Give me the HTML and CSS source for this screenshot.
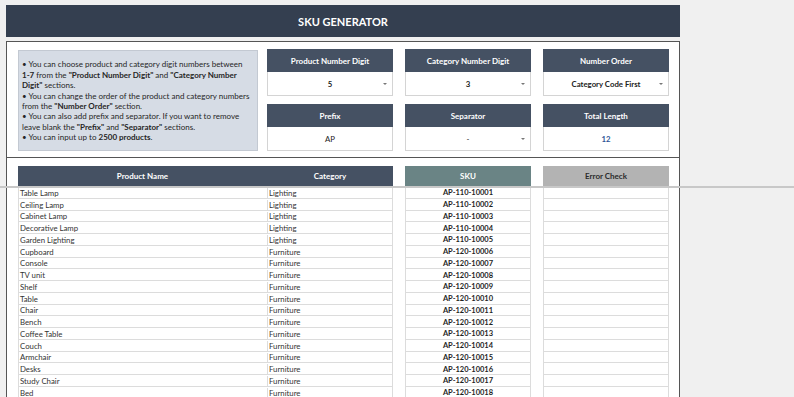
FILE: index.html
```html
<!DOCTYPE html>
<html lang="en">
<head>
  <meta charset="UTF-8">
  <title>SKU Generator</title>
  <link rel="stylesheet" href="styles.css">
</head>
<body>
  <div class="sheet">
    <div class="title">SKU GENERATOR</div>

    <div class="panel">
      <div class="top">
        <div class="info">
          <p>
            • You can choose product and category digit numbers between<br>
            <b>1-7</b> from the <b>"Product Number Digit"</b> and <b>"Category Number<br>
            Digit"</b> sections.<br>
            • You can change the order of the product and category numbers<br>
            from the <b>"Number Order"</b> section.<br>
            • You can also add prefix and separator. If you want to remove<br>
            leave blank the <b>"Prefix"</b> and <b>"Separator"</b> sections.<br>
            • You can input up to <b>2500 products</b>.
          </p>
        </div>

        <div class="cards">
          <div class="card">
            <div class="card-head">Product Number Digit</div>
            <div class="card-value bold drop">5</div>
          </div>
          <div class="card">
            <div class="card-head">Category Number Digit</div>
            <div class="card-value bold drop">3</div>
          </div>
          <div class="card">
            <div class="card-head">Number Order</div>
            <div class="card-value bold drop">Category Code First</div>
          </div>
          <div class="card">
            <div class="card-head">Prefix</div>
            <div class="card-value">AP</div>
          </div>
          <div class="card">
            <div class="card-head">Separator</div>
            <div class="card-value drop">-</div>
          </div>
          <div class="card">
            <div class="card-head">Total Length</div>
            <div class="card-value bold blue">12</div>
          </div>
        </div>
      </div>

      <div class="bottom">
        <div class="list products">
          <div class="list-head"><span>Product Name</span><span>Category</span></div>
          <div class="row"><span>Table Lamp</span><span>Lighting</span></div>
          <div class="row"><span>Ceiling Lamp</span><span>Lighting</span></div>
          <div class="row"><span>Cabinet Lamp</span><span>Lighting</span></div>
          <div class="row"><span>Decorative Lamp</span><span>Lighting</span></div>
          <div class="row"><span>Garden Lighting</span><span>Lighting</span></div>
          <div class="row"><span>Cupboard</span><span>Furniture</span></div>
          <div class="row"><span>Console</span><span>Furniture</span></div>
          <div class="row"><span>TV unit</span><span>Furniture</span></div>
          <div class="row"><span>Shelf</span><span>Furniture</span></div>
          <div class="row"><span>Table</span><span>Furniture</span></div>
          <div class="row"><span>Chair</span><span>Furniture</span></div>
          <div class="row"><span>Bench</span><span>Furniture</span></div>
          <div class="row"><span>Coffee Table</span><span>Furniture</span></div>
          <div class="row"><span>Couch</span><span>Furniture</span></div>
          <div class="row"><span>Armchair</span><span>Furniture</span></div>
          <div class="row"><span>Desks</span><span>Furniture</span></div>
          <div class="row"><span>Study Chair</span><span>Furniture</span></div>
          <div class="row"><span>Bed</span><span>Furniture</span></div>
        </div>

        <div class="list sku">
          <div class="list-head">SKU</div>
          <div class="row">AP-110-10001</div>
          <div class="row">AP-110-10002</div>
          <div class="row">AP-110-10003</div>
          <div class="row">AP-110-10004</div>
          <div class="row">AP-110-10005</div>
          <div class="row">AP-120-10006</div>
          <div class="row">AP-120-10007</div>
          <div class="row">AP-120-10008</div>
          <div class="row">AP-120-10009</div>
          <div class="row">AP-120-10010</div>
          <div class="row">AP-120-10011</div>
          <div class="row">AP-120-10012</div>
          <div class="row">AP-120-10013</div>
          <div class="row">AP-120-10014</div>
          <div class="row">AP-120-10015</div>
          <div class="row">AP-120-10016</div>
          <div class="row">AP-120-10017</div>
          <div class="row">AP-120-10018</div>
        </div>

        <div class="list errors">
          <div class="list-head">Error Check</div>
          <div class="row"></div>
          <div class="row"></div>
          <div class="row"></div>
          <div class="row"></div>
          <div class="row"></div>
          <div class="row"></div>
          <div class="row"></div>
          <div class="row"></div>
          <div class="row"></div>
          <div class="row"></div>
          <div class="row"></div>
          <div class="row"></div>
          <div class="row"></div>
          <div class="row"></div>
          <div class="row"></div>
          <div class="row"></div>
          <div class="row"></div>
          <div class="row"></div>
        </div>
      </div>
    </div>
  </div>

  <div class="freeze-line"></div>
</body>
</html>
```

FILE: styles.css
```css
html, body {
  height: 100%;
  overflow: hidden;
}

body {
  margin: 0;
  padding: 5px 6px 0 6px;
  background-color: #f0f0f0;
  font-family: Lato, 'Open Sans', sans-serif;
  font-size: 8px;
  color: #222;
  box-sizing: border-box;
}

.sheet {
  width: 674px;
}

.title {
  height: 32px;
  background-color: #343f50;
  color: #fff;
  font-size: 11px;
  font-weight: bold;
  display: flex;
  align-items: center;
  justify-content: center;
  margin-bottom: 4px;
}

.panel {
  background-color: #fff;
  border: 1px solid #555;
  border-bottom: none;
  height: 400px;
}

/* ---- top section ---- */

.top {
  display: flex;
  padding: 7px 0 6px 11px;
  border-bottom: 1px solid #555;
}

.info {
  width: 240px;
  height: 101px;
  margin: 1px 9px 0 0;
  box-sizing: border-box;
  background-color: #d6dce5;
  border: 1px solid #c3c9d2;
  display: flex;
  align-items: center;
  padding: 1px 0 0 3px;
  white-space: nowrap;
}

.info p {
  margin: 0;
  line-height: 10.4px;
  color: #262626;
}

.cards {
  display: grid;
  grid-template-columns: repeat(3, 126px);
  gap: 8px 12px;
}

.card-head {
  height: 23px;
  background-color: #455163;
  color: #fff;
  font-weight: bold;
  display: flex;
  align-items: center;
  justify-content: center;
}

.card-value {
  position: relative;
  height: 24px;
  box-sizing: border-box;
  border: 1px solid #d4d4d4;
  border-top: none;
  display: flex;
  align-items: center;
  justify-content: center;
  font-size: 7.8px;
}

.card-value.bold {
  font-weight: bold;
}

.card-value.blue {
  color: #2f5496;
}

.card-value.drop::after {
  content: "";
  position: absolute;
  right: 5px;
  top: 11px;
  border-left: 2px solid transparent;
  border-right: 2px solid transparent;
  border-top: 2.5px solid #777;
}

/* ---- lists ---- */

.bottom {
  display: flex;
  gap: 12px;
  padding: 8px 0 0 11px;
}

.list-head {
  height: 20px;
  background-color: #455163;
  color: #fff;
  font-weight: bold;
  display: flex;
  align-items: center;
  justify-content: center;
  margin-bottom: 1px;
}

.products {
  width: 375px;
}

.products .list-head span:first-child {
  width: 249px;
  text-align: center;
}

.products .list-head span:last-child {
  width: 126px;
  text-align: center;
}

.sku,
.errors {
  width: 126px;
}

.sku .list-head {
  background-color: #6a8485;
}

.errors .list-head {
  background-color: #b3b3b3;
  color: #2a2a2a;
}

.row {
  height: 11.75px;
  box-sizing: border-box;
  border: 1px solid #dcdcdc;
  border-top: none;
  padding-top: 1px;
  display: flex;
  align-items: center;
  font-size: 7.8px;
  color: #333;
}

.products .row span {
  padding-left: 1px;
  box-sizing: border-box;
}

.products .row span:first-child {
  width: 249px;
  border-right: 1px solid #dcdcdc;
  height: 100%;
  display: flex;
  align-items: center;
}

.sku .row {
  justify-content: center;
  font-weight: bold;
  font-size: 7.5px;
  color: #1f1f1f;
}

.freeze-line {
  position: absolute;
  left: 0;
  right: 0;
  top: 186px;
  height: 2px;
  background-color: #c8c8c8;
}
```
